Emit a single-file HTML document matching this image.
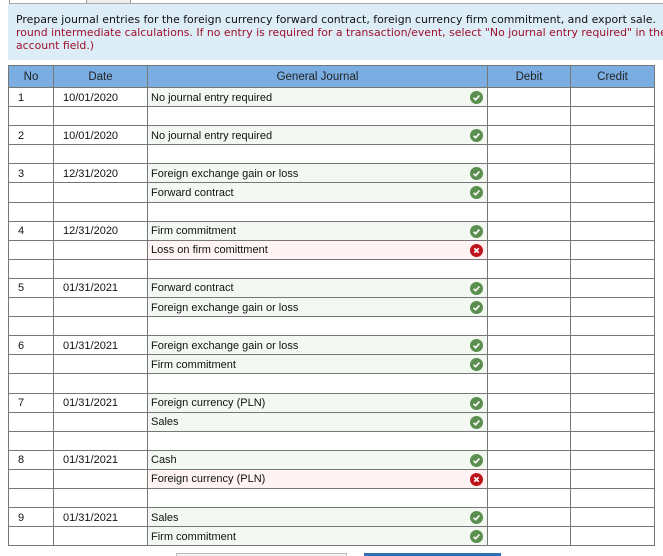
<!DOCTYPE html>
<html><head><meta charset="utf-8"><style>
*{margin:0;padding:0;box-sizing:border-box}
body{width:663px;height:556px;overflow:hidden;background:#fff;position:relative;font-family:"Liberation Sans",Arial,sans-serif}
.tab1{position:absolute;left:9px;top:0;width:78px;height:4px;border-left:1px solid #999;border-right:1px solid #999}
.tab2{position:absolute;left:87px;top:0;width:44px;height:4px;background:#eee;border-right:1px solid #999}
.line{position:absolute;left:9px;top:3px;width:654px;height:1px;background:#aaa}
.info{position:absolute;left:8px;top:4px;width:660px;height:56px;background:#dcedf8;font-family:"DejaVu Sans",sans-serif;font-size:10.9px;line-height:13px;padding:9px 0 0 8px;white-space:nowrap;overflow:hidden;color:#111}
.info .r{color:#a0102a}
table{position:absolute;left:8px;top:65px;border-collapse:collapse;font-size:11px;color:#111}
td,th{border:1px solid #777;height:19.1px;padding:1px 4px 0;white-space:nowrap}
th{background:#7aaee3;font-weight:normal;height:22px;color:#222;font-size:11.5px}
td.n{width:45px;padding-left:9px}
td.d{width:94px;padding-left:9px}
td.g{width:340px;position:relative;padding-left:3px}
td.g.ok{background:#f4f8f3}
td.g.bad{background:#fff4f3}
td.db{width:83px}td.cr{width:84px}
.ic{position:absolute;right:4px;top:3px;width:13px;height:13px}
.b1{position:absolute;left:176px;top:553px;width:171px;height:3px;border:1px solid #bbb;border-bottom:none;background:#f3f3f3}
.b2{position:absolute;left:364px;top:553px;width:137px;height:3px;background:#2f6fb5}
</style></head><body>
<div class="tab1"></div><div class="tab2"></div><div class="line"></div>
<div class="info">Prepare journal entries for the foreign currency forward contract, foreign currency firm commitment, and export sale.<br><span class="r">round intermediate calculations. If no entry is required for a transaction/event, select "No journal entry required" in the first</span><br><span class="r">account field.)</span></div>
<svg width="0" height="0" style="position:absolute"><defs>
<symbol id="ok" viewBox="0 0 13 13"><circle cx="6.5" cy="6.5" r="6.5" fill="#5a8f50"/><path d="M3.6 6.8 L5.6 8.7 L9.4 4.5" stroke="#fff" stroke-width="1.6" fill="none"/></symbol>
<symbol id="bad" viewBox="0 0 13 13"><circle cx="6.5" cy="6.5" r="6.5" fill="#c0141c"/><path d="M4.3 4.3 L8.7 8.7 M8.7 4.3 L4.3 8.7" stroke="#fff" stroke-width="1.7"/></symbol>
</defs></svg>
<table>
<tr><th>No</th><th>Date</th><th>General Journal</th><th>Debit</th><th>Credit</th></tr>
<tr><td class="n">1</td><td class="d">10/01/2020</td><td class="g ok">No journal entry required<svg class="ic"><use href="#ok"/></svg></td><td class="db"></td><td class="cr"></td></tr>
<tr><td></td><td></td><td></td><td></td><td></td></tr>
<tr><td class="n">2</td><td class="d">10/01/2020</td><td class="g ok">No journal entry required<svg class="ic"><use href="#ok"/></svg></td><td></td><td></td></tr>
<tr><td></td><td></td><td></td><td></td><td></td></tr>
<tr><td class="n">3</td><td class="d">12/31/2020</td><td class="g ok">Foreign exchange gain or loss<svg class="ic"><use href="#ok"/></svg></td><td></td><td></td></tr>
<tr><td></td><td></td><td class="g ok">Forward contract<svg class="ic"><use href="#ok"/></svg></td><td></td><td></td></tr>
<tr><td></td><td></td><td></td><td></td><td></td></tr>
<tr><td class="n">4</td><td class="d">12/31/2020</td><td class="g ok">Firm commitment<svg class="ic"><use href="#ok"/></svg></td><td></td><td></td></tr>
<tr><td></td><td></td><td class="g bad">Loss on firm comittment<svg class="ic"><use href="#bad"/></svg></td><td></td><td></td></tr>
<tr><td></td><td></td><td></td><td></td><td></td></tr>
<tr><td class="n">5</td><td class="d">01/31/2021</td><td class="g ok">Forward contract<svg class="ic"><use href="#ok"/></svg></td><td></td><td></td></tr>
<tr><td></td><td></td><td class="g ok">Foreign exchange gain or loss<svg class="ic"><use href="#ok"/></svg></td><td></td><td></td></tr>
<tr><td></td><td></td><td></td><td></td><td></td></tr>
<tr><td class="n">6</td><td class="d">01/31/2021</td><td class="g ok">Foreign exchange gain or loss<svg class="ic"><use href="#ok"/></svg></td><td></td><td></td></tr>
<tr><td></td><td></td><td class="g ok">Firm commitment<svg class="ic"><use href="#ok"/></svg></td><td></td><td></td></tr>
<tr><td></td><td></td><td></td><td></td><td></td></tr>
<tr><td class="n">7</td><td class="d">01/31/2021</td><td class="g ok">Foreign currency (PLN)<svg class="ic"><use href="#ok"/></svg></td><td></td><td></td></tr>
<tr><td></td><td></td><td class="g ok">Sales<svg class="ic"><use href="#ok"/></svg></td><td></td><td></td></tr>
<tr><td></td><td></td><td></td><td></td><td></td></tr>
<tr><td class="n">8</td><td class="d">01/31/2021</td><td class="g ok">Cash<svg class="ic"><use href="#ok"/></svg></td><td></td><td></td></tr>
<tr><td></td><td></td><td class="g bad">Foreign currency (PLN)<svg class="ic"><use href="#bad"/></svg></td><td></td><td></td></tr>
<tr><td></td><td></td><td></td><td></td><td></td></tr>
<tr><td class="n">9</td><td class="d">01/31/2021</td><td class="g ok">Sales<svg class="ic"><use href="#ok"/></svg></td><td></td><td></td></tr>
<tr><td></td><td></td><td class="g ok">Firm commitment<svg class="ic"><use href="#ok"/></svg></td><td></td><td></td></tr>
</table>
<div class="b1"></div><div class="b2"></div>
</body></html>
